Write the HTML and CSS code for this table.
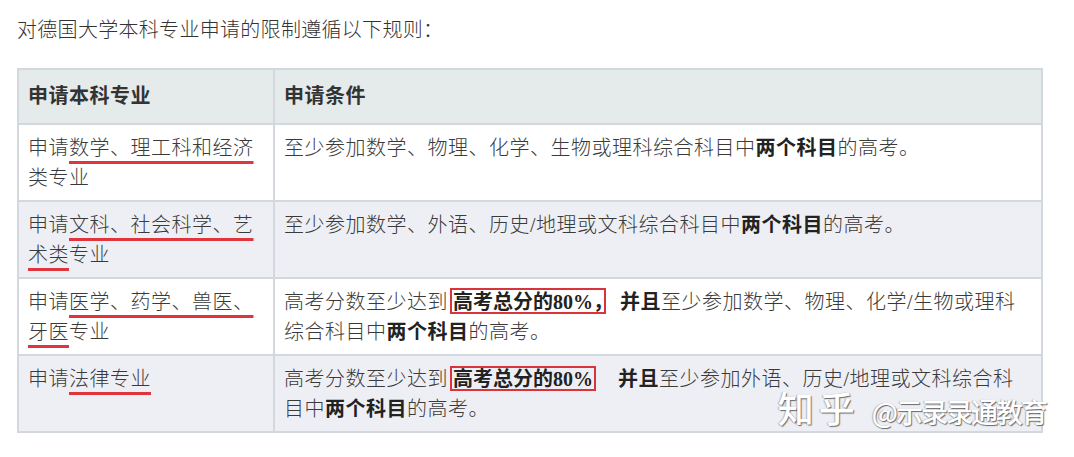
FILE: index.html
```html
<!DOCTYPE html>
<html lang="zh-CN">
<head>
  <meta charset="UTF-8">
  <title>德国大学本科专业申请</title>
  <link rel="stylesheet" href="styles.css">
</head>
<body>
  <p class="intro">对德国大学本科专业申请的限制遵循以下规则：</p>

  <div class="table-wrap">
    <table class="rules">
      <tr>
        <th class="col-major">申请本科专业</th>
        <th>申请条件</th>
      </tr>
      <tr>
        <td>申请<span class="mark">数学、理工科和经济</span>类专业</td>
        <td>至少参加数学、物理、化学、生物或理科综合科目中<b>两个科目</b>的高考。</td>
      </tr>
      <tr class="alt">
        <td>申请<span class="mark">文科、社会科学、艺术类</span>专业</td>
        <td>至少参加数学、外语、历史/地理或文科综合科目中<b>两个科目</b>的高考。</td>
      </tr>
      <tr>
        <td>申请<span class="mark">医学、药学、兽医、牙医</span>专业</td>
        <td>高考分数至少达到<span class="box">高考总分的80%<span class="comma">，</span></span><b class="and">并且</b>至少参加数学、物理、化学/生物或理科综合科目中<b>两个科目</b>的高考。</td>
      </tr>
      <tr class="alt">
        <td>申请<span class="mark">法律专业</span></td>
        <td>高考分数至少达到<span class="box">高考总分的80%</span><b class="and wide">并且</b>至少参加外语、历史/地理或文科综合科目中<b>两个科目</b>的高考。</td>
      </tr>
    </table>

    <span class="watermark"><span class="wm-logo">知乎</span> @示录录通教育</span>
  </div>
</body>
</html>
```

FILE: styles.css
```css
body {
  margin: 0;
  padding: 15px 17px;
  font-family: "Liberation Serif", "Noto Sans CJK SC", serif;
  font-weight: 300;
  color: #3a3a3a;
  background-color: #fff;
}

.intro {
  margin: 0 0 23px;
  font-size: 20px;
  line-height: 30px;
  letter-spacing: 0.3px;
  color: #333;
}

.table-wrap {
  position: relative;
  width: 1026px;
}

.rules {
  width: 1026px;
  border-collapse: collapse;
  border: 2px solid #cfd5da;
  font-size: 20px;
  line-height: 30px;
  letter-spacing: 0.5px;
}

th, td {
  border: 2px solid #d2d8dd;
  padding: 8px 9px 7px;
  text-align: left;
  vertical-align: top;
}

th {
  padding: 11px 9px 12px;
  background-color: #e5eaea;
  font-weight: bold;
  color: #333;
}

.col-major {
  width: 236px;
}

td {
  height: 60px;
}

tr.alt td {
  background-color: #eeeff4;
}

b {
  font-weight: bold;
  color: #222;
}

.mark {
  text-decoration: underline;
  text-decoration-color: #e0353d;
  text-decoration-thickness: 3px;
  text-underline-offset: 6px;
}

.box {
  display: inline-block;
  line-height: 20px;
  padding: 1px 1px 0;
  margin-left: 2px;
  border: 2px solid #d9343b;
  font-weight: bold;
  color: #222;
  letter-spacing: 0;
}

.comma {
  font-family: "Noto Sans CJK SC", sans-serif;
  font-feature-settings: "halt";
}

.and {
  margin-left: 14px;
}

.and.wide {
  margin-left: 22px;
}

.watermark {
  position: absolute;
  right: -3px;
  bottom: 4px;
  font-family: "Noto Sans CJK SC", sans-serif;
  font-weight: 500;
  font-size: 27px;
  line-height: 34px;
  letter-spacing: -2px;
  color: #fff;
  text-shadow: 1px 1px 1px rgba(0, 0, 0, 0.55), -1px 0 1px rgba(0, 0, 0, 0.25);
}

.wm-logo {
  font-size: 36px;
  letter-spacing: 5px;
  margin-right: 8px;
}
```
